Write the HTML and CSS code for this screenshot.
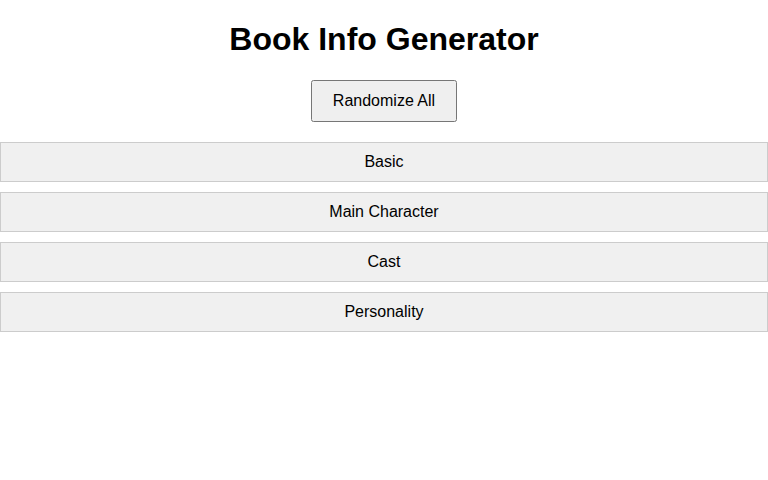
FILE: index.html
```html
<!DOCTYPE html>
<html>
<head>
<meta charset="utf-8">
<link rel="stylesheet" href="styles.css">
</head>
<body>
<h1 class="title">Book Info Generator</h1>
<div class="actions"><button class="randomize">Randomize All</button></div>
<div class="sections">
  <div class="section">Basic</div>
  <div class="section">Main Character</div>
  <div class="section">Cast</div>
  <div class="section">Personality</div>
</div>
</body>
</html>
```
FILE: styles.css
```css
body {
  margin: 0;
  font-family: "Liberation Sans", Arial, sans-serif;
  background: #fff;
  color: #000;
}
.title {
  text-align: center;
  font-size: 32px;
  margin: 21.44px 0;
}
.actions {
  text-align: center;
  margin-bottom: 20px;
}
.randomize {
  font-family: "Liberation Sans", Arial, sans-serif;
  font-size: 16px;
  padding: 10px 20px;
}
.sections {
  display: flex;
  flex-direction: column;
  gap: 10px;
}
.section {
  background: #f0f0f0;
  border: 1px solid #ccc;
  padding: 10px;
  text-align: center;
  font-size: 16px;
}
```
